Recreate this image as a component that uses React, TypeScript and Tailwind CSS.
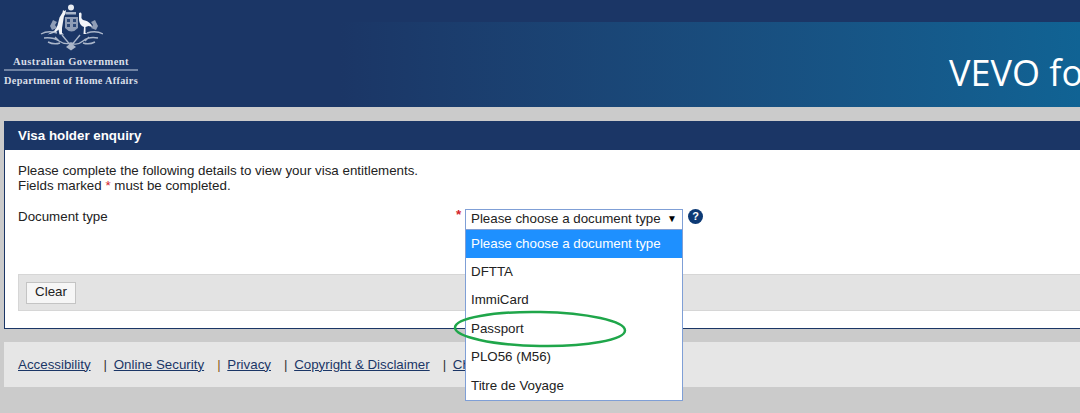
const options = ["DFTTA", "ImmiCard", "Passport", "PLO56 (M56)", "Titre de Voyage"];

function CoatOfArms() {
  return (
    <svg viewBox="0 0 64 48" className="w-[64px] h-[48px] blur-[0.4px]" fill="none">
      {/* crest */}
      <circle cx="32" cy="3.500" r="3" fill="#e8ecf2" />
      <path d="M27 8h10v2.500h-10z" fill="#aab6ca" />
      {/* shield */}
      <path d="M26 13h13v11q-6.500 7-13 0z" fill="#8f9db6" />
      <path d="M28 15h3v3h-3zM34 15h3v3h-3zM28 20h3v3h-3zM34 20h3v3h-3z" fill="#2d4877" />
      {/* kangaroo */}
      <path
        d="M24 6l1.500 1 1.500-1-.5 4-1.500 2-1 6-1 6 0 5 2 1.500-4.500 0-1-5-3 3-8 2 7-4 3-5 2-8 3-5z"
        fill="#f2f4f8"
      />
      {/* emu */}
      <path
        d="M40 9c2-1.500 3 0 2.500 3-.5 2.500 .5 4 3.500 4.500 3 .5 6 3 7.500 6.500l-4-1-3 1 0 6 2 1-4 0 .5-7c-3-1-5-4-5-8z"
        fill="#f2f4f8"
      />
      {/* wattle */}
      <path d="M14 16l4 2-2 3 2 3-5 2-2-4zM56 16l-4 2 2 3-2 3 5 2 2-4z" fill="#8f9db6" />
      <path
        d="M2 30q7-4 16-1M64 30q-7-4-16-1M5 34q9-1 15 3t12 2q6 3 12-2t15-3M9 38q6 3 12 1M56 38q-6 3-12 1M23 31l9 11 9-11M16 33l4 4M50 33l-4 4"
        stroke="#aab6ca"
        strokeWidth="1.400"
      />
      <path d="M27 43l5-4 5 4-5 3.500z" fill="#aab6ca" />
    </svg>
  );
}

export default function App() {
  return (
    <div className="relative h-[413px] w-[1080px] overflow-hidden bg-[#cbcbcb] font-['Liberation_Sans',Arial,sans-serif] text-[13.330px] text-[#222]">
      {/* Header */}
      <header className="relative h-[107px] bg-[#1b3666] overflow-hidden">
        <div className="absolute left-[340px] right-0 top-[22px] bottom-0 bg-gradient-to-r from-[#1b3666] to-[#106394]" />
        <div className="absolute left-[4px] top-[4px] w-[134px] flex flex-col items-center">
          <CoatOfArms />
          <div className="mt-[4px] font-['Liberation_Serif',serif] font-bold text-[10.500px] leading-[12px] text-[#d9dee8] tracking-[0.42px] whitespace-nowrap">
            Australian Government
          </div>
          <div className="mt-[1px] h-[2px] w-full bg-[#6f82a3]" />
          <div className="mt-[4px] font-['Liberation_Serif',serif] font-bold text-[10.300px] leading-[12px] text-[#d9dee8] tracking-[0.3px] whitespace-nowrap">
            Department of Home Affairs
          </div>
        </div>
        <h1 className="absolute left-[949px] top-[49px] font-['Open_Sans',sans-serif] text-[36px] leading-[48px] text-white whitespace-nowrap">
          VEVO for visa holders
        </h1>
      </header>

      {/* Enquiry panel */}
      <main className="mt-[14px] ml-[4px] w-[1200px] h-[208px] border border-[#1b3666] bg-white">
        <h2 className="h-[28px] bg-[#1b3666] pl-[13px] font-bold text-[13.330px] leading-[28px] text-white">
          Visa holder enquiry
        </h2>
        <div className="pl-[13px] pt-[13px] h-[124px] leading-[15px]">
          <p>Please complete the following details to view your visa entitlements.</p>
          <p>
            Fields marked <span className="text-[#d2232a]">*</span> must be completed.
          </p>
          <div className="mt-[16px] flex">
            <span className="w-[438px]">Document type</span>
            <span className="relative top-[-2px] text-[#d2232a] font-bold">*</span>
          </div>
        </div>
        <div className="ml-[13px] h-[37px] border border-[#d6d6d6] bg-[#e3e3e3] pl-[7px] pt-[7px]">
          <button className="h-[22px] w-[50px] border border-[#c4c4c4] bg-[#f6f6f6] text-[13.330px] leading-[18px] pb-[2px] text-[#222]">
            Clear
          </button>
        </div>
      </main>

      {/* Footer */}
      <footer className="mt-[13px] ml-[4px] w-[1200px] h-[45px] bg-[#e6e6e6] pl-[14px] flex items-center text-[#1b3666] whitespace-nowrap">
        <a className="underline">Accessibility</a>
        <span className="ml-[13px] mr-[6.700px] text-[#333]">|</span>
        <a className="underline">Online Security</a>
        <span className="ml-[13px] mr-[6.700px] text-[#8a5a20]">|</span>
        <a className="underline">Privacy</a>
        <span className="ml-[13px] mr-[6.700px] text-[#333]">|</span>
        <a className="underline">Copyright &amp; Disclaimer</a>
        <span className="ml-[13px] mr-[6.700px] text-[#333]">|</span>
        <a className="underline">Change language</a>
      </footer>

      {/* Open select */}
      <div className="absolute left-[465px] top-[209px] w-[218px]">
        <div className="h-[21px] border border-[#7f9fd6] bg-white pl-[5px] pr-[5px] pb-[1px] flex items-center justify-between leading-[18px] text-[#222]">
          <span className="whitespace-nowrap">Please choose a document type</span>
          <span className="text-[10px] text-black">▼</span>
        </div>
        <ul className="border border-t-0 border-[#7f9fd6] bg-white h-[171px]">
          <li className="h-[28px] bg-[#1e90ff] pl-[5px] leading-[27px] text-white">
            Please choose a document type
          </li>
          {options.map((o) => (
            <li key={o} className="h-[28.400px] pl-[5px] leading-[27.400px]">
              {o}
            </li>
          ))}
        </ul>
      </div>

      {/* Help icon */}
      <div className="absolute left-[688px] top-[209px] h-[15px] w-[15px] rounded-full bg-[#0d3a75] text-center text-[11px] font-bold leading-[15px] text-white">
        ?
      </div>

      {/* Green annotation */}
      <svg className="absolute left-[450px] top-[308px]" width="182" height="46" viewBox="0 0 182 46" fill="none">
        <ellipse cx="90" cy="21" rx="85" ry="17" stroke="#1fa64a" strokeWidth="2.500" transform="rotate(1 90 21)" />
      </svg>
    </div>
  );
}
